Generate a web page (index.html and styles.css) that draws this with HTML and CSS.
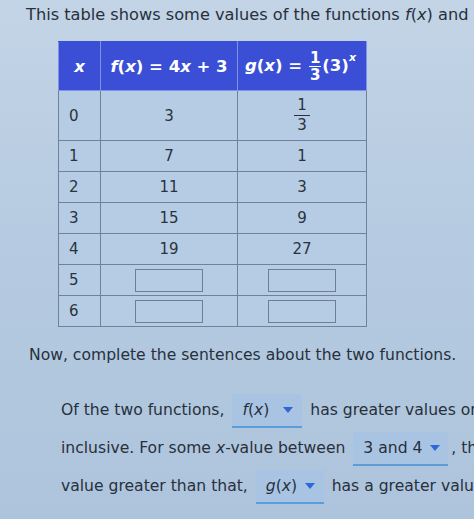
FILE: index.html
```html
<!DOCTYPE html>
<html>
<head>
<meta charset="utf-8">
<link rel="stylesheet" href="styles.css">
</head>
<body>
<div class="page">
  <p class="title">This table shows some values of the functions <i>f</i>(<i>x</i>) and <i>g</i>(<i>x</i>).</p>
  <table class="vals">
    <thead>
      <tr>
        <th class="cx"><i>x</i></th>
        <th class="cf"><i>f</i>(<i>x</i>) = 4<i>x</i> + 3</th>
        <th class="cg"><i>g</i>(<i>x</i>) = <span class="frac hfrac"><span class="num">1</span><span class="den">3</span></span>(3)<sup><i>x</i></sup></th>
      </tr>
    </thead>
    <tbody>
      <tr class="r0"><td class="cx">0</td><td>3</td><td><span class="frac"><span class="num">1</span><span class="den">3</span></span></td></tr>
      <tr><td class="cx">1</td><td>7</td><td>1</td></tr>
      <tr><td class="cx">2</td><td>11</td><td>3</td></tr>
      <tr><td class="cx">3</td><td>15</td><td>9</td></tr>
      <tr><td class="cx">4</td><td>19</td><td>27</td></tr>
      <tr><td class="cx">5</td><td><span class="box"></span></td><td><span class="box"></span></td></tr>
      <tr><td class="cx">6</td><td><span class="box"></span></td><td><span class="box"></span></td></tr>
    </tbody>
  </table>
  <p class="now">Now, complete the sentences about the two functions.</p>
  <div class="sentences">
    <div class="line">Of the two functions, <span class="dd w1"><span><i>f</i>(<i>x</i>)</span><span class="tri"></span></span> has greater values on the interval</div>
    <div class="line">inclusive. For some <i>x</i>-value between <span class="dd w2"><span>3 and 4</span><span class="tri"></span></span>, the two functions have equal values. For any <i>x</i>-</div>
    <div class="line">value greater than that, <span class="dd w3"><span><i>g</i>(<i>x</i>)</span><span class="tri"></span></span> has a greater value.</div>
  </div>
</div>
</body>
</html>
```

FILE: styles.css
```css
html, body {
  margin: 0;
  padding: 0;
}
body {
  width: 474px;
  height: 519px;
  overflow: hidden;
  background: linear-gradient(180deg, #c3d4e6 0%, #b6cbe1 45%, #adc4dc 100%);
  font-family: "DejaVu Sans", Verdana, sans-serif;
  color: #27303c;
}
.page {
  width: 474px;
  overflow: hidden;
}
.title {
  margin: 0;
  padding: 4px 0 0 26px;
  font-size: 16.2px;
  line-height: 22px;
  white-space: nowrap;
}
.vals {
  margin: 15px 0 0 58px;
  border-collapse: collapse;
  table-layout: fixed;
  font-size: 15px;
  background: #b5cce4;
}
.vals th {
  background: #3a4fd6;
  color: #ffffff;
  font-weight: bold;
  font-size: 16.5px;
  height: 48px;
  padding: 0;
  border: 1px solid #7f92e4;
  border-top-color: #3a4fd6;
  white-space: nowrap;
}
.vals th.cx { width: 41px; }
.vals th.cf { width: 136px; }
.vals th.cg { width: 121px; text-align: left; padding-left: 7px; }
.vals td {
  border: 1px solid #6e8298;
  text-align: center;
  height: 30px;
  padding: 0;
  color: #2a333d;
}
.vals td.cx {
  text-align: left;
  padding-left: 10px;
}
.vals tr.r0 td { height: 49px; }
.frac {
  display: inline-flex;
  flex-direction: column;
  align-items: center;
  vertical-align: middle;
  line-height: 19px;
  font-size: 15px;
}
.frac .num {
  border-bottom: 1px solid #2a333d;
  padding: 0 3px;
}
.hfrac {
  font-size: 15px;
  line-height: 16px;
  margin: 0 1px;
}
.hfrac .num {
  border-bottom: 1.5px solid #ffffff;
  padding: 0 1px;
}
.vals sup {
  font-size: 11px;
  vertical-align: 10px;
  line-height: 0;
}
.box {
  display: inline-block;
  width: 66px;
  height: 21px;
  border: 1px solid #6d7f93;
  vertical-align: middle;
}
.now {
  margin: 17px 0 0 29px;
  font-size: 15.6px;
  line-height: 22px;
  white-space: nowrap;
}
.sentences {
  padding: 25px 0 0 61px;
  font-size: 15.6px;
  white-space: nowrap;
}
.line {
  height: 38px;
  line-height: 38px;
}
.dd {
  display: inline-flex;
  align-items: center;
  justify-content: space-between;
  box-sizing: border-box;
  height: 34px;
  padding: 0 9px 0 10px;
  background: #a9c4e2;
  border-bottom: 2px solid #5b9cd9;
  vertical-align: middle;
  line-height: 20px;
  margin: 0 3px;
}
.w1 { width: 70px; }
.w2 { width: 95px; }
.w3 { width: 68px; }
.tri {
  width: 0;
  height: 0;
  border-left: 5px solid transparent;
  border-right: 5px solid transparent;
  border-top: 6px solid #2b68d8;
  margin-left: 8px;
}
```
